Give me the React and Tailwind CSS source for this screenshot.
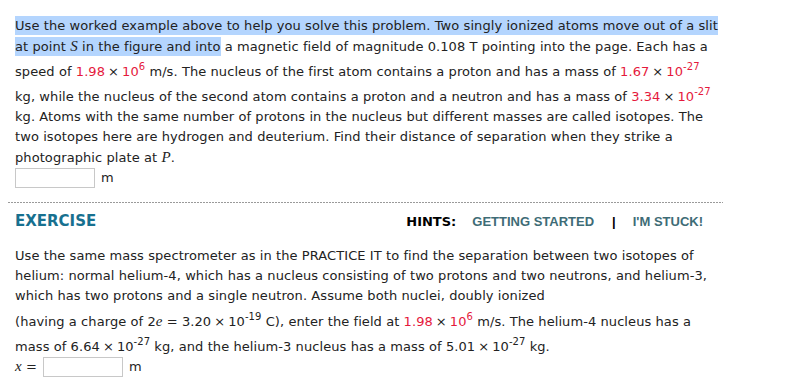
import React from 'react';

const Red = ({ children }) => <span className="text-[#e5193c]">{children}</span>;
const Sup = ({ children, red }) => (
  <sup className={`text-[10px] -top-[6px] ${red ? 'text-[#e5193c]' : ''}`}>{children}</sup>
);
const Times = () => <span className="mx-[3px]">×</span>;
const Math = ({ children }) => (
  <span className="italic text-[15px]" style={{ fontFamily: '"Liberation Serif", serif' }}>{children}</span>
);
const Sel = ({ children }) => <span className="bg-[#b4d5fe] py-[2px]">{children}</span>;

const Line = ({ tall, children }) => (
  <div className={`leading-5 whitespace-nowrap ${tall ? 'pt-[5px]' : ''}`}>{children}</div>
);

const AnswerBox = ({ label }) => (
  <div className="flex items-center h-5">
    {label}
    <div className="w-20 h-5 border border-[#c8c8c8] bg-white" />
    <span className="ml-[6px]">m</span>
  </div>
);

export default function App() {
  return (
    <div
      className="w-[785px] h-[386px] bg-white text-[#222] text-[13px] tracking-[0.08px] overflow-hidden"
      style={{ fontFamily: '"DejaVu Sans", Verdana, sans-serif' }}
    >
      <div className="pt-4 pl-[15px]">
        <Line>
          <Sel>Use the worked example above to help you solve this problem. Two singly ionized atoms move out of a slit </Sel>
        </Line>
        <Line>
          <Sel>at point <Math>S</Math> in the figure and into</Sel> a magnetic field of magnitude 0.108 T pointing into the page. Each has a
        </Line>
        <Line tall>
          speed of <Red>1.98</Red><Times /><Red>10</Red><Sup red>6</Sup> m/s. The nucleus of the first atom contains a proton and has a mass of <Red>1.67</Red><Times /><Red>10</Red><Sup red>-27</Sup>
        </Line>
        <Line tall>
          kg, while the nucleus of the second atom contains a proton and a neutron and has a mass of <Red>3.34</Red><Times /><Red>10</Red><Sup red>-27</Sup>
        </Line>
        <Line>kg. Atoms with the same number of protons in the nucleus but different masses are called isotopes. The</Line>
        <Line>two isotopes here are hydrogen and deuterium. Find their distance of separation when they strike a</Line>
        <Line>photographic plate at <Math>P</Math>.</Line>
        <AnswerBox />
      </div>

      <div className="ml-2 mt-[14px] w-[715px] h-px bg-[repeating-linear-gradient(90deg,#9a9a9a_0_2px,transparent_2px_3px)]" />

      <div className="pl-[15px] pr-[82px] pt-[7px] flex items-center justify-between tracking-normal">
        <span className="text-[15px] font-bold text-[#17708f]">EXERCISE</span>
        <div className="flex items-center font-bold">
          <span className="text-black">HINTS:</span>
          <span
            className="ml-[16px] text-[#3e6c76]"
            style={{ fontFamily: '"Liberation Sans", Arial, sans-serif' }}
          >
            GETTING STARTED
          </span>
          <span className="ml-[18px] text-black" style={{ fontFamily: '"Liberation Sans", Arial, sans-serif' }}>|</span>
          <span
            className="ml-[17px] text-[#3e6c76]"
            style={{ fontFamily: '"Liberation Sans", Arial, sans-serif' }}
          >
            I'M STUCK!
          </span>
        </div>
      </div>

      <div className="pl-[15px] pt-[13px]">
        <Line>Use the same mass spectrometer as in the PRACTICE IT to find the separation between two isotopes of</Line>
        <Line>helium: normal helium-4, which has a nucleus consisting of two protons and two neutrons, and helium-3,</Line>
        <Line>which has two protons and a single neutron. Assume both nuclei, doubly ionized</Line>
        <Line tall>
          (having a charge of 2<Math>e</Math> = 3.20<Times />10<Sup>-19</Sup> C), enter the field at <Red>1.98</Red><Times /><Red>10</Red><Sup red>6</Sup> m/s. The helium-4 nucleus has a
        </Line>
        <Line tall>
          mass of 6.64<Times />10<Sup>-27</Sup> kg, and the helium-3 nucleus has a mass of 5.01<Times />10<Sup>-27</Sup> kg.
        </Line>
        <AnswerBox label={<span className="mr-[6px] w-[22px]"><Math>x</Math> =</span>} />
      </div>
    </div>
  );
}
